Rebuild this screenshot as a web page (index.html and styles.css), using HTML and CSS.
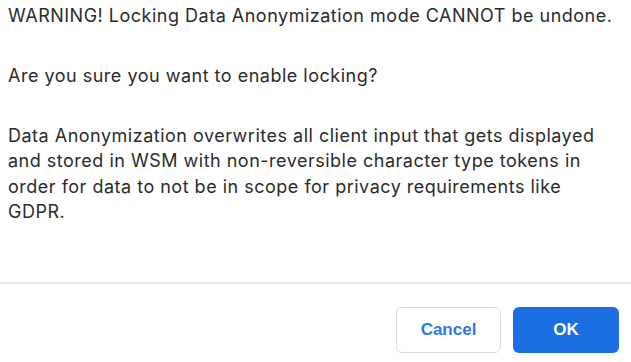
FILE: index.html
```html
<!DOCTYPE html>
<html lang="en">
<head>
  <meta charset="UTF-8">
  <meta name="viewport" content="width=device-width, initial-scale=1.0">
  <title>Lock Data Anonymization</title>
  <link rel="stylesheet" href="styles.css">
</head>
<body>

  <div class="dialog">
    <!-- Message -->
    <div class="dialog-body">
      <p>WARNING! Locking Data Anonymization mode CANNOT be undone.</p>
      <p>Are you sure you want to enable locking?</p>
      <p>Data Anonymization overwrites all client input that gets displayed and stored in WSM with non-reversible character type tokens in order for data to not be in scope for privacy requirements like GDPR.</p>
    </div>

    <!-- Buttons -->
    <div class="dialog-footer">
      <button class="btn btn-cancel">Cancel</button>
      <button class="btn btn-ok">OK</button>
    </div>
  </div>

</body>
</html>
```

FILE: styles.css
```css
* {
  margin: 0;
  padding: 0;
  box-sizing: border-box;
}

body {
  font-family: Inter, "Liberation Sans", Arial, sans-serif;
  background-color: #ffffff;
  color: #2b2b2b;
}

.dialog {
  width: 631px;
  height: 362px;
  display: flex;
  flex-direction: column;
}

.dialog-body {
  padding: 3px 12px 0 8px;
  height: 282px;
}

.dialog-body p {
  font-size: 18px;
  line-height: 25.3px;
  letter-spacing: 0.5px;
  margin-bottom: 34.7px;
}

.dialog-footer {
  border-top: 2px solid #e6e6eb;
  display: flex;
  justify-content: flex-end;
  gap: 12px;
  padding: 23px 12px 0 0;
}

.btn {
  font-family: "Liberation Sans", Arial, sans-serif;
  font-size: 17px;
  font-weight: bold;
  height: 46px;
  border-radius: 6px;
  cursor: pointer;
}

.btn-cancel {
  width: 105px;
  background-color: #ffffff;
  color: #2a7ae4;
  border: 1px solid #d9dde2;
}

.btn-ok {
  width: 106px;
  background-color: #1b6fe2;
  color: #ffffff;
  border: none;
}
```
